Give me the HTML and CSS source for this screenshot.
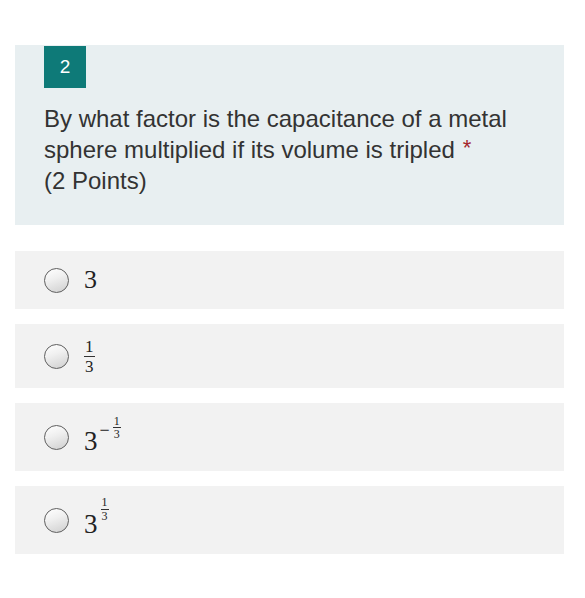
FILE: index.html
```html
<!DOCTYPE html>
<html lang="en">
<head>
<meta charset="utf-8">
<title>Question 2</title>
<link rel="stylesheet" href="styles.css">
</head>
<body>
<main class="form">
  <section class="question">
    <div class="badge">2</div>
    <p class="q-text">By what factor is the capacitance of a metal sphere multiplied if its volume is tripled<span class="req">*</span><br>(2 Points)</p>
  </section>

  <label class="option">
    <span class="radio"></span>
    <span class="math"><span class="base">3</span></span>
  </label>

  <label class="option option-frac">
    <span class="radio"></span>
    <span class="math">
      <span class="frac"><span class="num">1</span><span class="den">3</span></span>
    </span>
  </label>

  <label class="option option-pow">
    <span class="radio"></span>
    <span class="math pow">
      <span class="base">3</span>
      <span class="exp"><span class="minus">−</span><span class="frac small"><span class="num">1</span><span class="den">3</span></span></span>
    </span>
  </label>

  <label class="option option-pow">
    <span class="radio"></span>
    <span class="math pow">
      <span class="base">3</span>
      <span class="exp exp-plain"><span class="frac small"><span class="num">1</span><span class="den">3</span></span></span>
    </span>
  </label>
</main>
</body>
</html>
```

FILE: styles.css
```css
html, body {
  margin: 0;
  padding: 0;
  background: #ffffff;
}

.form {
  padding: 45px 21px 0 15px;
  display: flex;
  flex-direction: column;
}

.question {
  background: #e8eff1;
  padding: 1px 29px 29px 29px;
  margin-bottom: 26px;
}

.badge {
  width: 42px;
  height: 42px;
  background: #0e7a78;
  color: #ffffff;
  font-family: "Liberation Sans", Arial, sans-serif;
  font-size: 19px;
  line-height: 42px;
  text-align: center;
}

.q-text {
  margin: 15px 0 0 0;
  font-family: "Liberation Sans", Arial, sans-serif;
  font-size: 24px;
  line-height: 31px;
  color: #333333;
}

.req {
  display: inline-block;
  margin-left: 8px;
  color: #a4262c;
  font-size: 22px;
  line-height: 18px;
  vertical-align: 3px;
}

.option {
  display: flex;
  align-items: center;
  gap: 15px;
  height: 58px;
  padding: 0 29px;
  background: #f2f2f2;
  margin-bottom: 15px;
  box-sizing: border-box;
}

.option-frac {
  height: 64px;
}

.option-pow {
  height: 68px;
}

.radio {
  width: 25px;
  height: 25px;
  border-radius: 50%;
  border: 1.5px solid #5f5f5f;
  box-sizing: border-box;
  background: linear-gradient(160deg, #ffffff 0%, #f0f0f0 40%, #cfcfcf 100%);
  flex: none;
}

.math {
  font-family: "Liberation Serif", "Times New Roman", serif;
  color: #222222;
  display: flex;
  align-items: center;
}

.base {
  font-size: 26px;
  line-height: 26px;
}

.frac {
  display: inline-flex;
  flex-direction: column;
  align-items: center;
  font-size: 17px;
  line-height: 15px;
}

.frac .num {
  padding: 0 1px 2px;
  border-bottom: 1px solid #333333;
}

.frac .den {
  padding-top: 2px;
}

.pow {
  align-items: flex-start;
  padding-top: 8px;
}

.option-pow .base {
  font-size: 27px;
  line-height: 27px;
}

.exp {
  display: flex;
  align-items: flex-start;
  margin-top: -12px;
  margin-left: 2px;
}

.minus {
  font-size: 18px;
  line-height: 17px;
  margin-top: 6px;
  margin-right: 3px;
}

.frac.small {
  font-size: 12px;
  line-height: 10px;
}

.frac.small .num {
  padding: 0 1px 1px;
}

.frac.small .den {
  padding-top: 1px;
}

.exp-plain {
  margin-top: -14px;
  margin-left: 3px;
}

.exp-plain .frac.small .num {
  padding-bottom: 2px;
}
```
